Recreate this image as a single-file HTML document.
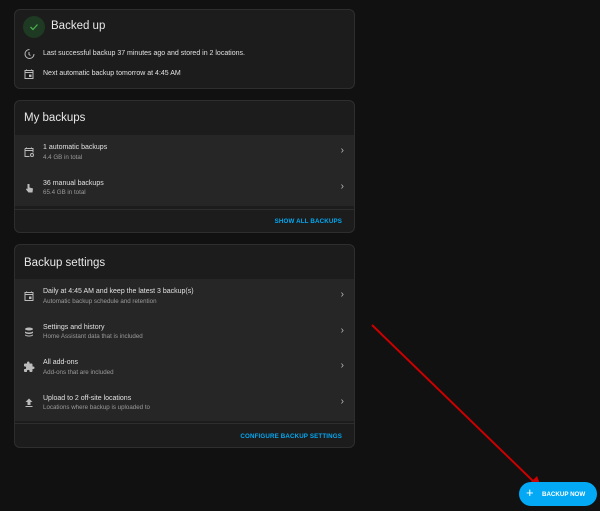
<!DOCTYPE html>
<html><head><meta charset="utf-8"><style>
*{margin:0;padding:0;box-sizing:border-box}
body{width:600px;height:511px;background:#111111;font-family:"Liberation Sans",sans-serif;color:#e1e1e1;position:relative;overflow:hidden}
.card{position:absolute;left:14px;width:341px;background:#1c1c1c;border:1px solid #2e2e2e;border-radius:6px;overflow:hidden}
.ic{position:absolute;left:8px;width:12px;height:12px}
.t{position:absolute;left:28px;color:#e1e1e1;font-size:7px;white-space:nowrap}
.s{position:absolute;left:28px;color:#9a9a9a;font-size:6.2px;white-space:nowrap}
.chev{position:absolute;right:10px;color:#bbb;font-size:10px}
.list{position:absolute;left:0;right:0;background:#262626}
.btn{position:absolute;right:12px;color:#03a9f4;font-size:6.2px;font-weight:bold;letter-spacing:.15px}
h2{position:absolute;left:9px;font-weight:normal;font-size:11.5px;color:#e8e8e8}
</style></head><body>
<div class="card" style="top:9px;height:80px">
 <div style="position:absolute;left:8px;top:6px;width:22px;height:22px;border-radius:50%;background:#1f3a22"></div>
 <svg style="position:absolute;left:13px;top:11px" width="12" height="12" viewBox="0 0 24 24"><path d="M5 12l5 5 9-10" stroke="#4caf50" stroke-width="2.5" fill="none"/></svg>
 <div style="position:absolute;left:36px;top:10px;font-size:11.5px;color:#e8e8e8">Backed up</div>
 <svg class="ic" style="top:38px" viewBox="0 0 24 24"><path d="M13 3a9 9 0 1 0 9 9" stroke="#bbb" stroke-width="2" fill="none"/><path d="M12 8v5l3 2" stroke="#bbb" stroke-width="2" fill="none"/></svg>
 <div class="t" style="top:40px">Last successful backup 37 minutes ago and stored in 2 locations.</div>
 <svg class="ic" style="top:58px" viewBox="0 0 24 24"><path d="M4 5h16v16H4zM4 9h16M7 3v3M17 3v3" stroke="#bbb" stroke-width="2" fill="none"/><rect x="12" y="13" width="5" height="5" fill="#bbb"/></svg>
 <div class="t" style="top:60px">Next automatic backup tomorrow at 4:45 AM</div>
</div>
<div class="card" style="top:100px;height:133px">
 <h2 style="top:11px">My backups</h2>
 <div class="list" style="top:34px;height:71px"></div>
 <svg class="ic" style="top:45px" viewBox="0 0 24 24"><path d="M4 5h16v8M4 5v16h9M4 9h16M7 3v3M17 3v3" stroke="#bbb" stroke-width="2" fill="none"/><circle cx="18" cy="18" r="3" stroke="#bbb" stroke-width="2" fill="none"/></svg>
 <div class="t" style="top:43px">1 automatic backups</div>
 <div class="s" style="top:53px">4.4 GB in total</div><div class="chev" style="top:44px">›</div>
 <svg class="ic" style="top:81px" viewBox="0 0 24 24"><path d="M9 4v10l-2-1-1 2 5 6h8l1-8-7-2V4z" fill="#bbb"/></svg>
 <div class="t" style="top:79px">36 manual backups</div>
 <div class="s" style="top:88px">65.4 GB in total</div><div class="chev" style="top:80px">›</div>
 <div style="position:absolute;left:0;right:0;top:108px;border-top:1px solid #2e2e2e"></div>
 <div class="btn" style="top:117px">SHOW ALL BACKUPS</div>
</div>
<div class="card" style="top:244px;height:204px">
 <h2 style="top:12px">Backup settings</h2>
 <div class="list" style="top:34px;height:142px"></div>
 <svg class="ic" style="top:45px" viewBox="0 0 24 24"><path d="M4 5h16v16H4zM4 9h16M7 3v3M17 3v3" stroke="#bbb" stroke-width="2" fill="none"/><rect x="12" y="13" width="5" height="5" fill="#bbb"/></svg>
 <div class="t" style="top:43px">Daily at 4:45 AM and keep the latest 3 backup(s)</div>
 <div class="s" style="top:53px">Automatic backup schedule and retention</div><div class="chev" style="top:44px">›</div>
 <svg class="ic" style="top:81px" viewBox="0 0 24 24"><ellipse cx="12" cy="6" rx="8" ry="3" fill="#bbb"/><path d="M4 10c0 4 16 4 16 0v3c0 4-16 4-16 0zM4 16c0 4 16 4 16 0v2c0 4-16 4-16 0z" fill="#bbb"/></svg>
 <div class="t" style="top:79px">Settings and history</div>
 <div class="s" style="top:88px">Home Assistant data that is included</div><div class="chev" style="top:80px">›</div>
 <svg class="ic" style="top:116px" viewBox="0 0 24 24"><path d="M20.5 11H19V7a2 2 0 0 0-2-2h-4V3.5a2.5 2.5 0 0 0-5 0V5H4a2 2 0 0 0-2 2v3.8h1.5a2.7 2.7 0 0 1 0 5.4H2V20a2 2 0 0 0 2 2h3.8v-1.5a2.7 2.7 0 0 1 5.4 0V22H17a2 2 0 0 0 2-2v-4h1.5a2.5 2.5 0 0 0 0-5z" fill="#bbb"/></svg>
 <div class="t" style="top:114px">All add-ons</div>
 <div class="s" style="top:124px">Add-ons that are included</div><div class="chev" style="top:115px">›</div>
 <svg class="ic" style="top:152px" viewBox="0 0 24 24"><path d="M9 16h6v-6h4l-7-7-7 7h4zM5 18h14v2H5z" fill="#bbb"/></svg>
 <div class="t" style="top:150px">Upload to 2 off-site locations</div>
 <div class="s" style="top:159px">Locations where backup is uploaded to</div><div class="chev" style="top:151px">›</div>
 <div style="position:absolute;left:0;right:0;top:178px;border-top:1px solid #2e2e2e"></div>
 <div class="btn" style="top:188px">CONFIGURE BACKUP SETTINGS</div>
</div>
<svg style="position:absolute;left:0;top:0" width="600" height="511"><line x1="372" y1="325" x2="533" y2="481" stroke="#cc0000" stroke-width="2"/><path d="M542 489l-14-4 9-9z" fill="#cc0000"/></svg>
<div style="position:absolute;left:519px;top:482px;width:78px;height:24px;border-radius:12px;background:#03a9f4;color:#fff;font-size:6.2px;font-weight:bold">
 <span style="position:absolute;left:7px;top:4px;font-size:13px;font-weight:normal;line-height:14px">+</span>
 <span style="position:absolute;left:23px;top:9px">BACKUP NOW</span>
</div>
</body></html>
